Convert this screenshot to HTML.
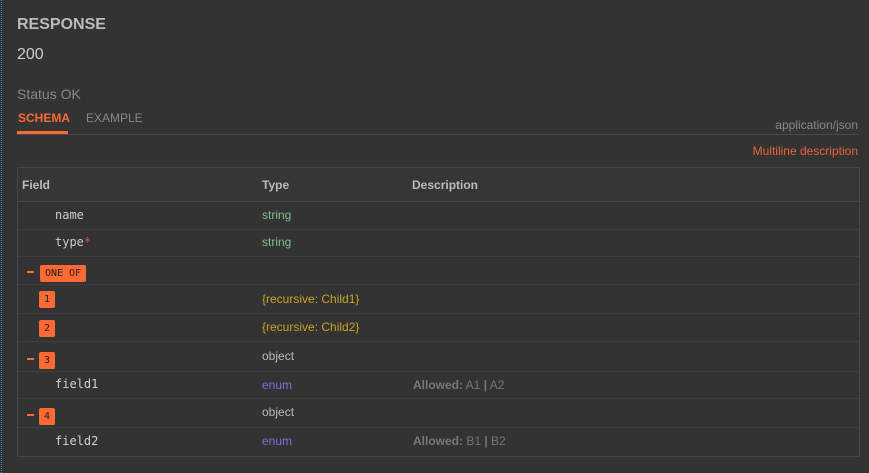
<!DOCTYPE html>
<html><head><style>
*{margin:0;padding:0;box-sizing:border-box}
body{width:869px;height:473px;background:#333;font-family:"Liberation Sans",sans-serif;position:relative;overflow:hidden;color:#ccc}
.a{position:absolute;white-space:nowrap}
.mono{font-family:"DejaVu Sans Mono","Liberation Mono",monospace}
.row{position:absolute;left:18px;width:841px;border-bottom:1px dotted #4a4a4a}
.b{position:absolute;background:#fb6a35;color:#2a1a10;font-family:"DejaVu Sans Mono",monospace;font-size:10px;border-radius:2px;text-align:center;line-height:17px;height:17px}
.dash{position:absolute;width:7px;height:2px;background:#fb6a35;left:27px}
</style></head><body>
<div class="a" style="left:1px;top:0;height:473px;width:1px;border-left:1px dotted #3a8ee6"></div>
<div class="a" style="left:17px;top:16px;font-size:16px;font-weight:bold;color:#bbb">RESPONSE</div>
<div class="a" style="left:17px;top:46px;font-size:16px;color:#ccc">200</div>
<div class="a" style="left:17px;top:86px;font-size:14px;color:#888">Status OK</div>
<div class="a" style="left:18px;top:111px;font-size:12px;font-weight:bold;color:#fb6a35">SCHEMA</div>
<div class="a" style="left:17px;top:131px;width:51px;height:3px;background:#fb6a35"></div>
<div class="a" style="left:86px;top:111px;font-size:12px;color:#888">EXAMPLE</div>
<div class="a" style="left:17px;top:134px;width:842px;height:1px;background:#4a4a4a"></div>
<div class="a" style="right:11px;top:118px;font-size:12px;color:#888">application/json</div>
<div class="a" style="right:11px;top:144px;font-size:12px;color:#e8643a">Multiline description</div>
<div class="a" style="left:17px;top:167px;width:843px;height:290px;border:1px solid #474747"></div>
<div class="a" style="left:18px;top:168px;width:841px;height:34px;background:#363636;border-bottom:1px solid #474747"></div>
<div class="a" style="left:22px;top:178px;font-size:12px;font-weight:bold;color:#bbb">Field</div>
<div class="a" style="left:262px;top:178px;font-size:12px;font-weight:bold;color:#bbb">Type</div>
<div class="a" style="left:412px;top:178px;font-size:12px;font-weight:bold;color:#bbb">Description</div>
<div class="row" style="top:202px;height:28px"></div>
<div class="row" style="top:230px;height:27px"></div>
<div class="row" style="top:257px;height:28px"></div>
<div class="row" style="top:285px;height:29px"></div>
<div class="row" style="top:314px;height:28px"></div>
<div class="row" style="top:342px;height:30px"></div>
<div class="row" style="top:372px;height:27px"></div>
<div class="row" style="top:399px;height:29px"></div>
<div class="a mono" style="left:55px;top:208px;font-size:12px;color:#ccc">name</div>
<div class="a" style="left:262px;top:208px;font-size:12px;color:#7fbf8a">string</div>
<div class="a mono" style="left:55px;top:235px;font-size:12px;color:#ccc">type<span style="color:#e05050">*</span></div>
<div class="a" style="left:262px;top:235px;font-size:12px;color:#7fbf8a">string</div>
<div class="dash" style="top:271px"></div>
<div class="b" style="left:40px;top:265px;width:46px">ONE OF</div>
<div class="b" style="left:39px;top:291px;width:16px">1</div>
<div class="a" style="left:262px;top:292px;font-size:12px;color:#c9a321">{recursive: Child1}</div>
<div class="b" style="left:39px;top:320px;width:16px">2</div>
<div class="a" style="left:262px;top:320px;font-size:12px;color:#c9a321">{recursive: Child2}</div>
<div class="dash" style="top:358px"></div>
<div class="b" style="left:39px;top:352px;width:16px">3</div>
<div class="a" style="left:262px;top:349px;font-size:12px;color:#bbb">object</div>
<div class="a mono" style="left:55px;top:377px;font-size:12px;color:#d0d0d0">field1</div>
<div class="a" style="left:262px;top:378px;font-size:12px;color:#7b6fd8">enum</div>
<div class="a" style="left:413px;top:378px;font-size:12px;color:#777"><b>Allowed:</b> A1 <b>|</b> A2</div>
<div class="dash" style="top:414px"></div>
<div class="b" style="left:39px;top:408px;width:16px">4</div>
<div class="a" style="left:262px;top:405px;font-size:12px;color:#bbb">object</div>
<div class="a mono" style="left:55px;top:434px;font-size:12px;color:#d0d0d0">field2</div>
<div class="a" style="left:262px;top:434px;font-size:12px;color:#7b6fd8">enum</div>
<div class="a" style="left:413px;top:434px;font-size:12px;color:#777"><b>Allowed:</b> B1 <b>|</b> B2</div>
</body></html>
